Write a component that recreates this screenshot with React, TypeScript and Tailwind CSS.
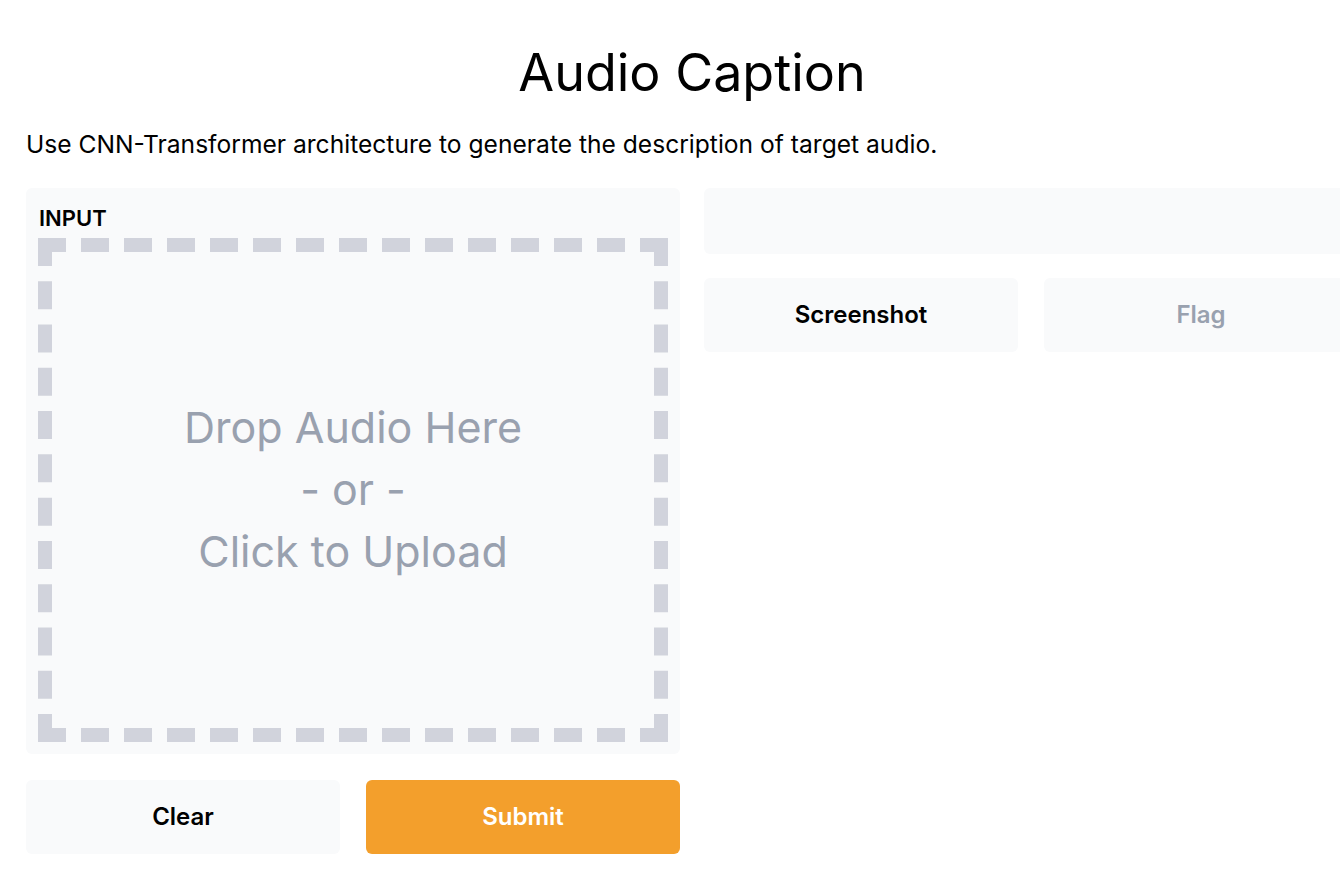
import React from 'react';

const font = { fontFamily: 'Inter, "Noto Sans", sans-serif' };

const App: React.FC = () => {
  return (
    <div className="w-[1340px] min-h-[886px] overflow-hidden bg-white" style={font}>
      <div className="w-[1384px] px-[26px]">
        {/* Title */}
        <h1 className="text-center text-[52px] leading-none text-black pt-[47px] pb-[29px] font-normal">
          Audio Caption
        </h1>
        <p className="text-[24.6px] leading-8 text-black mb-[28px]">
          Use CNN-Transformer architecture to generate the description of target audio.
        </p>

        <div className="grid grid-cols-2 gap-6">
          {/* Input column */}
          <div className="flex flex-col gap-[26px]">
            <div className="bg-gray-50 rounded-md p-3">
              <div className="h-[38px] pl-[1px] pt-[6px] text-[22px] font-semibold leading-6 text-black">INPUT</div>
              <div className="h-[504px] border-[14px] border-dashed border-[#d1d3dc] flex items-center justify-center">
                <div className="text-center text-[43px] leading-[62px] text-gray-400 pb-[3px]">
                  Drop Audio Here
                  <br />- or -
                  <br />
                  Click to Upload
                </div>
              </div>
            </div>
            <div className="grid grid-cols-2 gap-[26px]">
              <button className="h-[74px] rounded-md bg-gray-50 text-[24px] font-semibold text-black">Clear</button>
              <button className="h-[74px] rounded-md bg-[#f39f2c] text-[24px] font-semibold text-white">Submit</button>
            </div>
          </div>

          {/* Output column */}
          <div className="flex flex-col gap-6">
            <div className="h-[66px] rounded-md bg-gray-50" />
            <div className="grid grid-cols-2 gap-[26px]">
              <button className="h-[74px] rounded-md bg-gray-50 text-[24px] font-semibold text-black">Screenshot</button>
              <button className="h-[74px] rounded-md bg-gray-50 text-[24px] font-semibold text-gray-400">Flag</button>
            </div>
          </div>
        </div>
      </div>
    </div>
  );
};

export default App;
